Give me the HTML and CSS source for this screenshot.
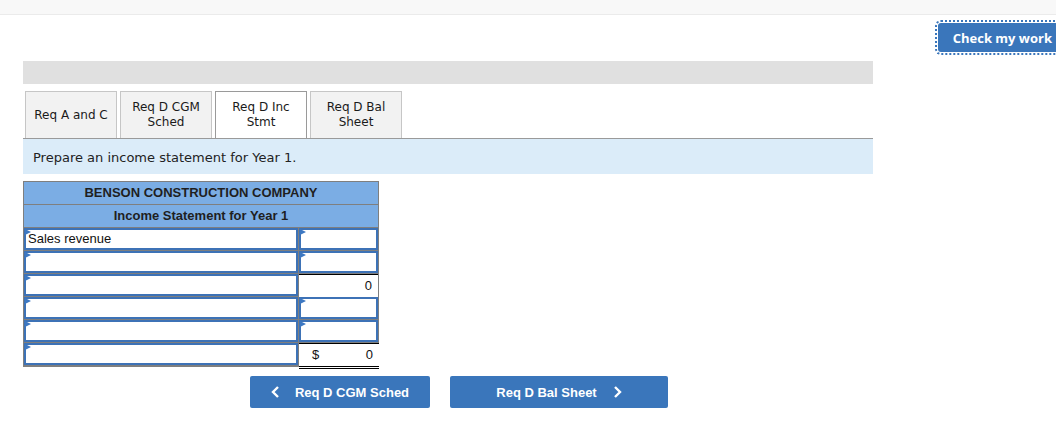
FILE: index.html
```html
<!DOCTYPE html>
<html lang="en">
<head>
    <meta charset="UTF-8">
    <meta name="viewport" content="width=device-width, initial-scale=1.0">
    <title>Income Statement</title>
    <link rel="stylesheet" href="styles.css">
</head>
<body>
    <div class="topbar"></div>

    <div class="check-row">
        <button class="check-btn">Check my work</button>
    </div>

    <div class="main">
        <div class="graybar"></div>

        <div class="tabs">
            <div class="tab">Req A and C</div>
            <div class="tab">Req D CGM<br>Sched</div>
            <div class="tab active">Req D Inc<br>Stmt</div>
            <div class="tab">Req D Bal<br>Sheet</div>
        </div>

        <div class="instructions">Prepare an income statement for Year 1.</div>

        <div class="sheet">
            <div class="sheet-head">BENSON CONSTRUCTION COMPANY</div>
            <div class="sheet-head">Income Statement for Year 1</div>

            <div class="sheet-row">
                <div class="cell-input drop">Sales revenue</div>
                <div class="cell-input drop"></div>
            </div>
            <div class="sheet-row">
                <div class="cell-input drop"></div>
                <div class="cell-input drop"></div>
            </div>
            <div class="sheet-row">
                <div class="cell-input drop"></div>
                <div class="cell-calc">0</div>
            </div>
            <div class="sheet-row">
                <div class="cell-input drop"></div>
                <div class="cell-input drop"></div>
            </div>
            <div class="sheet-row">
                <div class="cell-input drop"></div>
                <div class="cell-input drop"></div>
            </div>
            <div class="sheet-row">
                <div class="cell-input drop"></div>
                <div class="cell-calc total"><span>$</span><span>0</span></div>
            </div>
        </div>

        <div class="nav">
            <button class="nav-btn prev">
                <svg width="9" height="12" viewBox="0 0 9 12"><polyline points="7,1 2,6 7,11" fill="none" stroke="#fff" stroke-width="2.4"/></svg>
                <span>Req D CGM Sched</span>
            </button>
            <button class="nav-btn next">
                <span>Req D Bal Sheet</span>
                <svg width="9" height="12" viewBox="0 0 9 12"><polyline points="2,1 7,6 2,11" fill="none" stroke="#fff" stroke-width="2.4"/></svg>
            </button>
        </div>
    </div>
</body>
</html>
```

FILE: styles.css
```css
body {
    margin: 0;
    background-color: #ffffff;
    color: #222;
    font-family: "DejaVu Sans", Verdana, sans-serif;
    overflow: hidden;
}
.topbar {
    height: 14px;
    background-color: #f8f8f8;
    border-bottom: 1px solid #ebebeb;
}
.check-row {
    display: flex;
    justify-content: flex-end;
    padding-top: 8px;
    margin-right: -14px;
}
.check-btn {
    height: 29px;
    padding: 0 18px 0 15px;
    background-color: #3a76bb; /* blu pulsante */
    color: #fff;
    border: none;
    border-radius: 3px;
    font-family: "Open Sans", sans-serif;
    font-weight: 700;
    font-size: 13px;
    outline: 2px dotted #3a76bb;
    outline-offset: 1px;
}
.main {
    margin-left: 23px;
    width: 850px;
}
.graybar {
    margin-top: 9px;
    height: 23px;
    background-color: #e0e0e0;
}
.tabs {
    display: flex;
    gap: 3px;
    margin-top: 7px;
    padding-left: 2px;
    border-bottom: 1px solid #9a9a9a;
}
.tab {
    box-sizing: border-box;
    width: 92px;
    height: 47px;
    display: flex;
    align-items: center;
    justify-content: center;
    text-align: center;
    font-size: 12px;
    line-height: 15px;
    background-color: #f2f2f2;
    border: 1px solid #c6c6c6;
    border-bottom: none;
    color: #1a1a1a;
}
.tab.active {
    background-color: #fff;
    border-color: #9a9a9a;
}
.instructions {
    height: 35px;
    line-height: 37px;
    padding-left: 10px;
    background-color: #dbecf9;
    font-size: 13px;
    color: #222;
}
.sheet {
    margin-top: 7px;
    width: 356px;
    box-sizing: border-box;
    border: 1px solid #7f7f7f;
    font-family: "Liberation Sans", Arial, sans-serif;
}
.sheet-head {
    height: 22px;
    line-height: 22px;
    text-align: center;
    font-weight: 700;
    font-size: 13px;
    background-color: #7badE4;
    border-bottom: 1px solid #7f7f7f;
    color: #1f1f1f;
}
.sheet-row {
    display: grid;
    grid-template-columns: 274px 1fr;
    gap: 1px;
    height: 23px;
    background-color: #7f7f7f;
}
.cell-input {
    position: relative;
    box-sizing: border-box;
    height: 22px;
    border: 2px solid #3d72b6;
    background-color: #fff;
    font-size: 13px;
    line-height: 18px;
    padding-left: 2px;
    color: #111;
}
.drop::before {
    content: "";
    position: absolute;
    left: -1px;
    top: -1px;
    border-top: 3px solid transparent;
    border-bottom: 3px solid transparent;
    border-left: 6px solid #3d78c2;
}
.cell-calc {
    box-sizing: border-box;
    height: 23px;
    background-color: #fff;
    border-top: 1px solid #000;
    text-align: right;
    padding-right: 6px;
    font-size: 13px;
    line-height: 22px;
    color: #111;
}
.cell-calc.total {
    display: flex;
    justify-content: space-between;
    padding-left: 13px;
    border-bottom: 3px double #000;
    margin-right: -1px;
    height: 26px;
}
.nav {
    display: flex;
    gap: 20px;
    margin-top: 9px;
    margin-left: 227px;
}
.nav-btn {
    display: flex;
    align-items: center;
    justify-content: center;
    height: 32px;
    border: none;
    border-radius: 2px;
    background-color: #3a76bb;
    color: #fff;
    font-family: "Liberation Sans", Arial, sans-serif;
    font-weight: 700;
    font-size: 13px;
}
.nav-btn.prev {
    width: 180px;
    gap: 15px;
}
.nav-btn.next {
    width: 218px;
    gap: 16px;
}
```
